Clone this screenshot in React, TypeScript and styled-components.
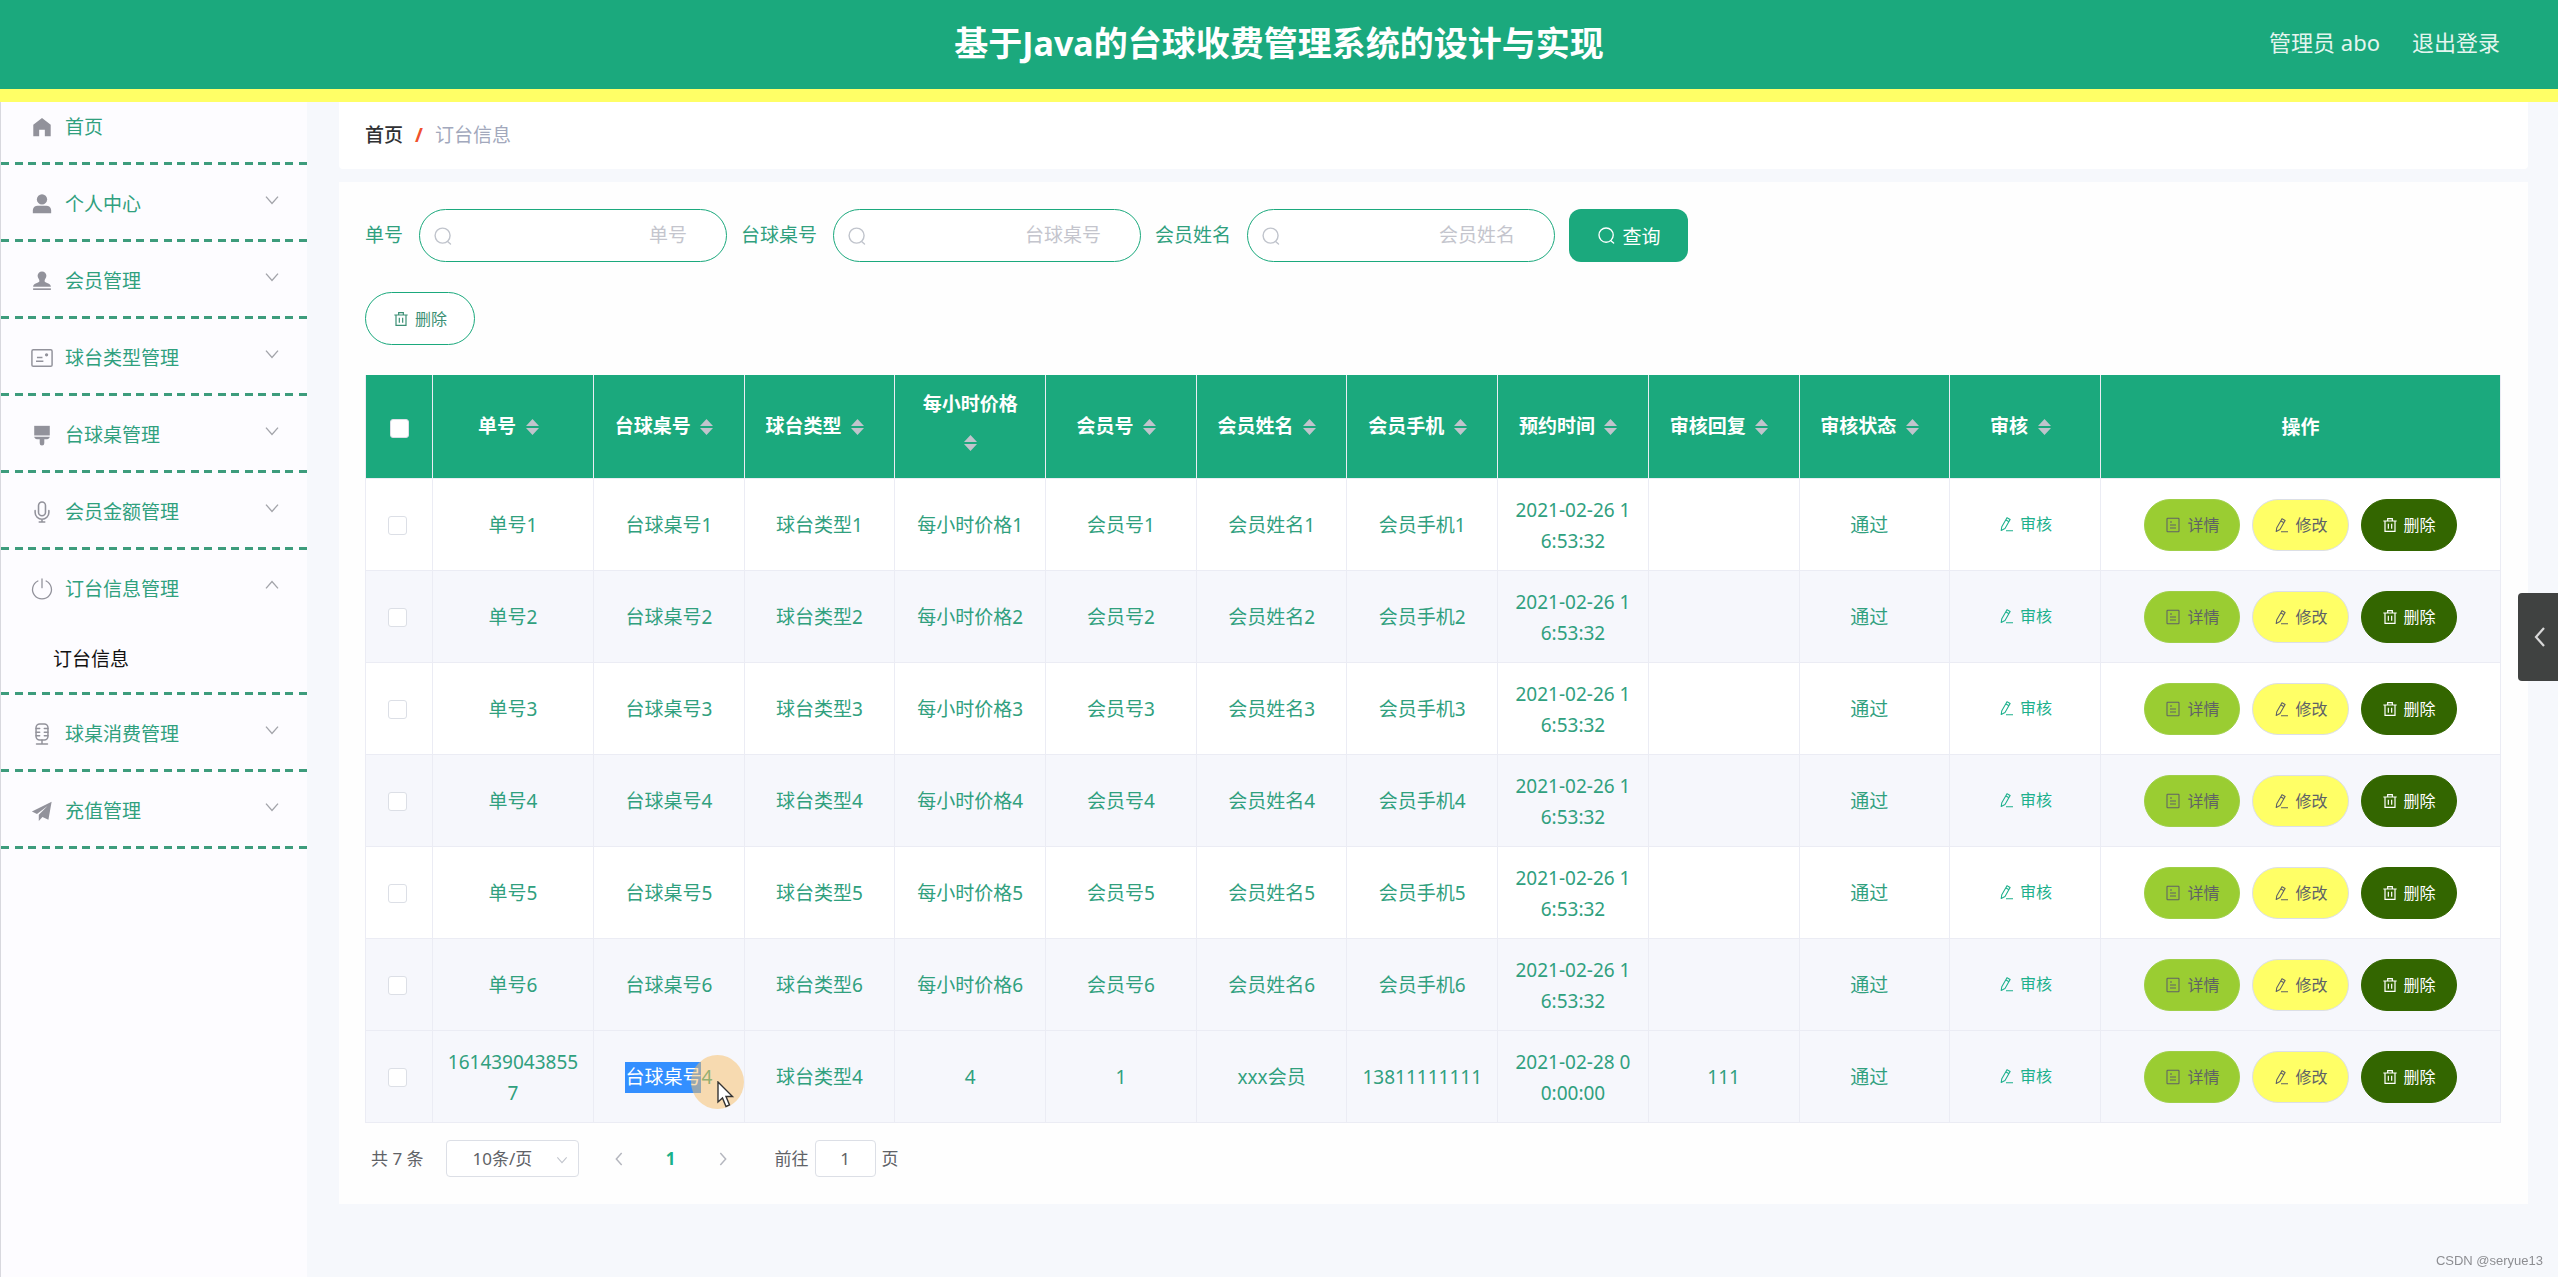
import React from 'react';
import styled, { createGlobalStyle } from 'styled-components';

const GREEN = '#1ba97d';
const TEXT_GREEN = '#30a07e';
const LINE = '#ebecf4';
const FONT = '"Noto Sans", "Noto Sans CJK SC", sans-serif';

const GlobalStyle = createGlobalStyle`
  *, *::before, *::after { box-sizing: border-box; }
  body {
    margin: 0;
    background: #f6f8fc;
    font-family: ${FONT};
    font-size: 19px;
    line-height: 31px;
    color: ${TEXT_GREEN};
  }
  button, input, select { font-family: inherit; margin: 0; }
  button { cursor: pointer; }
  a { color: inherit; text-decoration: none; }
`;

/* ---------- icons ---------- */

type IconName =
  | 'home' | 'user' | 'stamp' | 'card' | 'brush' | 'mic' | 'power' | 'studioMic' | 'plane'
  | 'down' | 'up' | 'left' | 'right' | 'search' | 'trash' | 'doc' | 'edit';

const glyphs: Record<IconName, React.ReactNode> = {
  home: <path d="M12 2.2 21.5 9.6V22h-6.4v-7H8.9v7H2.500V9.600Z" fill="currentColor" />,
  user: (
    <g fill="currentColor">
      <circle cx="12" cy="7" r="5.6" />
      <path d="M2 22v-3.500A5.500 5.500 0 0 1 7.500 14h9A5.500 5.500 0 0 1 22 18.500V22Z" />
    </g>
  ),
  stamp: (
    <g fill="currentColor">
      <path d="M12 1.500a4.800 4.800 0 0 1 4.800 4.800c0 2.700-2 3.700-2 5.700 0 2.600 6.900 1.800 6.900 6.400H2.300c0-4.600 6.900-3.800 6.900-6.400 0-2-2-3-2-5.700A4.800 4.800 0 0 1 12 1.500Z" />
      <rect x="2.300" y="20" width="19.400" height="1.800" />
    </g>
  ),
  card: (
    <g fill="none" stroke="currentColor" strokeWidth="1.600">
      <rect x="1" y="3" width="22" height="18" rx="1.500" />
      <path d="M6.500 11.500h6M5.500 15.500h8" />
      <circle cx="17" cy="8.500" r="1" fill="currentColor" />
    </g>
  ),
  brush: (
    <g fill="currentColor">
      <path d="M3.500 2h17v10.500h-17Z" />
      <path d="M3.500 14h17c-.3 1.500-1.500 2.500-3 2.500h-3V21a2.500 2.500 0 0 1-5 0v-4.500h-3c-1.500 0-2.700-1-3-2.500Z" />
    </g>
  ),
  mic: (
    <g fill="none" stroke="currentColor" strokeWidth="1.700" strokeLinecap="round">
      <rect x="8.200" y="1" width="7.600" height="15" rx="3.800" />
      <path d="M4.500 10.500v2a7.500 7.500 0 0 0 15 0v-2M12 20v3M9 23h6" />
    </g>
  ),
  power: (
    <g fill="none" stroke="currentColor" strokeWidth="1.400" strokeLinecap="round">
      <path d="M12 1v9.500M7.500 3.300a10.300 10.300 0 1 0 9 0" />
    </g>
  ),
  studioMic: (
    <g fill="none" stroke="currentColor" strokeWidth="1.600" strokeLinecap="round">
      <rect x="5.500" y="1" width="13" height="17.500" rx="4" />
      <path d="M5.500 6h4M5.500 10h4M5.500 14h4M18.500 6h-4M18.500 10h-4M18.500 14h-4M12 18.500V23M6 23h12" />
    </g>
  ),
  plane: <path d="M22.500 2 1 12.500l5.500 2.700L18 6.500 8.500 16v7l4-4.500 6.500 3Z" fill="currentColor" />,
  down: <path d="m4 7.500 8 9 8-9" fill="none" stroke="currentColor" strokeWidth="1.800" />,
  up: <path d="m4 16.500 8-9 8 9" fill="none" stroke="currentColor" strokeWidth="1.800" />,
  left: <path d="m16 3-8 9 8 9" fill="none" stroke="currentColor" strokeWidth="2.200" />,
  right: <path d="m8 3 8 9-8 9" fill="none" stroke="currentColor" strokeWidth="2.200" />,
  search: (
    <g fill="none" stroke="currentColor" strokeWidth="1.700" strokeLinecap="round">
      <circle cx="11.500" cy="11.500" r="9" />
      <path d="m17.500 18.500 3.500 3" />
    </g>
  ),
  trash: (
    <g fill="none" stroke="currentColor" strokeWidth="1.800">
      <path d="M2 6h20M8.500 6V2.500h7V6M4.500 6v15.500h15V6M9.500 10v7.500M14.500 10v7.500" />
    </g>
  ),
  doc: (
    <g fill="none" stroke="currentColor" strokeWidth="1.600">
      <rect x="3" y="2" width="18" height="20" rx="1" />
      <path d="M7.500 7.500h3M7.500 12h9M7.500 16.500h9" />
    </g>
  ),
  edit: (
    <g fill="none" stroke="currentColor" strokeWidth="1.600" strokeLinejoin="round">
      <path d="m13.500 2.500 4.700 2.700-7.700 13.500-5.700 3 .9-5.700ZM12 6l4.500 2.700M12 22h10.500" />
    </g>
  ),
};

const Svg = styled.svg<{ $size: number }>`
  display: block;
  flex: none;
  width: ${(p) => p.$size}px;
  height: ${(p) => p.$size}px;
`;

const Icon = ({ name, size }: { name: IconName; size: number }) => (
  <Svg $size={size} viewBox="0 0 24 24" aria-hidden="true">
    {glyphs[name]}
  </Svg>
);

/* ---------- frame ---------- */

const Header = styled.header`
  display: grid;
  grid-template-columns: 1fr auto 1fr;
  align-items: center;
  height: 102px;
  padding: 0 58px 3px;
  background: ${GREEN};
  border-bottom: 13px solid #ffff66;
  color: #fff;
`;

const Title = styled.h1`
  grid-column: 2;
  margin: 0;
  font-size: 34px;
  line-height: 48px;
  font-weight: 700;
`;

const Account = styled.div`
  display: flex;
  justify-content: flex-end;
  gap: 32px;
  padding-bottom: 2px;
  font-size: 22px;
  line-height: 32px;
  color: #e4f5ef;
`;

const Body = styled.div`
  display: flex;
  align-items: stretch;
  min-height: calc(100vh - 102px);
`;

const Sidebar = styled.nav`
  flex: none;
  width: 307px;
  background: #fdfcff;
  border-left: 1px solid #d8d8de;
`;

const MenuGroup = styled.div`
  padding-bottom: 3px;
  background: repeating-linear-gradient(
      to right,
      #3d9c7c 0 8px,
      transparent 8px calc((100% - 8px) / 22)
    )
    bottom / 100% 3px no-repeat;
`;

const MenuItem = styled.a<{ $home?: boolean }>`
  display: flex;
  align-items: center;
  gap: 12px;
  height: ${(p) => (p.$home ? 60 : 74)}px;
  padding: ${(p) => (p.$home ? '0 26px 10px 30px' : '4px 26px 0 30px')};
  color: ${TEXT_GREEN};
  > svg:first-child { color: #92929b; }
`;

const MenuLabel = styled.span`
  flex: 1;
`;

const Chevron = styled.span`
  color: #a3a4aa;
  padding-bottom: 8px;
`;

const SubItem = styled.a`
  display: flex;
  align-items: center;
  height: 68px;
  padding: 2px 0 0 52px;
  color: #111;
`;

const Main = styled.main`
  flex: 1;
  min-width: 0;
  padding: 0 30px 73px 32px;
`;

const Breadcrumb = styled.div`
  display: flex;
  align-items: center;
  gap: 12px;
  height: 67px;
  margin-bottom: 13px;
  padding: 0 26px;
  background: #fff;
  border-radius: 0 0 4px 4px;
  color: #a2a8bc;
`;

const Crumb = styled.a`
  font-weight: 500;
  color: #303133;
`;

const Slash = styled.span`
  font-weight: 700;
  color: #f0512d;
`;

const Panel = styled.section`
  padding: 27px 27px 27px 26px;
  background: #fefefe;
`;

/* ---------- search ---------- */

const SearchForm = styled.form`
  display: flex;
  align-items: center;
  gap: 14px;
`;

const Field = styled.div`
  display: flex;
  align-items: center;
  gap: 16px;
`;

const InputShell = styled.div`
  display: flex;
  align-items: center;
  width: 308px;
  height: 53px;
  padding: 0 37px 0 13px;
  border: 1px solid ${GREEN};
  border-radius: 27px;
  background: #fff;
  color: #c0c4cc;
`;

const TextInput = styled.input`
  flex: 1;
  min-width: 0;
  border: 0;
  outline: 0;
  background: transparent;
  text-align: right;
  font-size: 19px;
  line-height: 31px;
  color: ${TEXT_GREEN};
  &::placeholder { color: #c4c5cd; opacity: 1; }
`;

const SearchButton = styled.button`
  display: flex;
  align-items: center;
  justify-content: center;
  gap: 7px;
  width: 119px;
  height: 53px;
  border: 0;
  border-radius: 12px;
  background: ${GREEN};
  color: #fff;
  font-size: 19px;
`;

const Actions = styled.div`
  display: flex;
  padding: 30px 0;
`;

/* ---------- buttons ---------- */

type Tone = 'outline' | 'lime' | 'yellow' | 'forest';

const tones: Record<Tone, { bg: string; line: string; ink: string }> = {
  outline: { bg: '#ffffff', line: GREEN, ink: '#3b8f74' },
  lime: { bg: '#9acd32', line: '#9fcf48', ink: '#606266' },
  yellow: { bg: '#ffff66', line: '#dcdfe6', ink: '#606266' },
  forest: { bg: '#336600', line: '#336600', ink: '#ffffff' },
};

const Pill = styled.button<{ $tone: Tone; $wide?: boolean }>`
  display: inline-flex;
  align-items: center;
  gap: 6px;
  height: ${(p) => (p.$wide ? 53 : 52)}px;
  padding: 0 ${(p) => (p.$wide ? 27 : 20)}px;
  border: 1px solid ${(p) => tones[p.$tone].line};
  border-radius: 27px;
  background: ${(p) => tones[p.$tone].bg};
  color: ${(p) => tones[p.$tone].ink};
  font-size: 16px;
  line-height: 24px;
`;

const LinkButton = styled.button`
  display: inline-flex;
  align-items: center;
  gap: 6px;
  padding: 0;
  border: 0;
  background: none;
  color: #1cb08c;
  font-size: 16px;
  line-height: 24px;
`;

const RowActions = styled.div`
  display: flex;
  justify-content: center;
  gap: 12px;
`;

/* ---------- table ---------- */

const Table = styled.table`
  width: 100%;
  table-layout: fixed;
  border-collapse: separate;
  border-spacing: 0;
  border-left: 1px solid ${LINE};
`;

const Th = styled.th`
  height: 104px;
  padding: 1px 13px 0;
  background: ${GREEN};
  border-right: 1px solid ${LINE};
  border-bottom: 1px solid ${LINE};
  color: #fff;
  font-weight: 700;
  text-align: center;
  vertical-align: middle;
`;

const Td = styled.td`
  position: relative;
  height: 92px;
  padding: 2px 13px 0;
  border-right: 1px solid ${LINE};
  border-bottom: 1px solid ${LINE};
  text-align: center;
  vertical-align: middle;
  word-break: break-all;
`;

const CheckTd = styled(Td)`
  padding: 0 17px 0 13px;
`;

const StatusTd = styled(Td)`
  padding: 2px 23px 0 13px;
`;

const ActionTd = styled(Td)`
  padding: 0 13px;
`;

const Row = styled.tr<{ $shaded: boolean }>`
  background: ${(p) => (p.$shaded ? '#f6f7fc' : '#ffffff')};
`;

const Check = styled.input`
  display: inline-block;
  appearance: none;
  width: 19px;
  height: 19px;
  margin: 0;
  border: 1px solid #dcdfe6;
  border-radius: 3px;
  background: #fff;
  vertical-align: middle;
`;

const Caret = styled.span`
  display: inline-flex;
  align-items: center;
  justify-content: center;
  width: 32px;
  height: 45px;
  vertical-align: middle;
`;

const SortCaret = () => (
  <Caret>
    <svg width="13" height="16" viewBox="0 0 13 16" aria-hidden="true">
      <path d="M6.500 0 13 7H0ZM6.500 16 0 9h13Z" fill="#c0c4cc" />
    </svg>
  </Caret>
);

const Selected = styled.span`
  display: inline-block;
  background: #338fff;
  color: #fff;
`;

const PointerHalo = styled.span`
  position: absolute;
  left: 97px;
  top: 24px;
  width: 53px;
  height: 54px;
  border-radius: 50%;
  background: rgba(247, 190, 100, 0.5);
  pointer-events: none;
  svg { position: absolute; left: 26px; top: 26px; }
`;

/* ---------- pagination ---------- */

const Pagination = styled.div`
  display: flex;
  align-items: center;
  padding: 17px 0 0 6px;
  font-size: 17px;
  line-height: 37px;
  color: #606266;
`;

const SizePicker = styled.div`
  position: relative;
  margin: 0 14px 0 22px;
  svg { position: absolute; right: 10px; top: 13px; color: #c0c4cc; pointer-events: none; }
`;

const SizeSelect = styled.select`
  display: block;
  appearance: none;
  width: 133px;
  height: 37px;
  padding: 0 26px;
  border: 1px solid #dcdfe6;
  border-radius: 4px;
  background: #fff;
  color: #606266;
  font-size: 17px;
`;

const PageButton = styled.button<{ $current?: boolean }>`
  display: flex;
  align-items: center;
  justify-content: center;
  width: 52px;
  height: 37px;
  padding: 0;
  border: 0;
  background: none;
  font-size: 17px;
  font-weight: 700;
  color: ${(p) => (p.$current ? '#18b18a' : '#b4b6be')};
`;

const Jump = styled.label`
  display: flex;
  align-items: center;
  gap: 6px;
  margin-left: 26px;
`;

const JumpInput = styled.input`
  width: 61px;
  height: 37px;
  border: 1px solid #dcdfe6;
  border-radius: 4px;
  background: #fff;
  color: #606266;
  font-size: 17px;
  text-align: center;
`;

/* ---------- floating parts ---------- */

const SideTab = styled.button`
  position: fixed;
  right: 0;
  top: 593px;
  display: flex;
  align-items: center;
  justify-content: center;
  width: 40px;
  height: 88px;
  padding: 0 0 0 4px;
  border: 0;
  border-radius: 4px 0 0 4px;
  background: #404241;
  color: #d8d8d8;
`;

const Watermark = styled.div`
  position: fixed;
  right: 15px;
  bottom: 6px;
  font-family: "Liberation Sans", Arial, sans-serif;
  font-size: 13px;
  line-height: 20px;
  color: #8d8e92;
`;

/* ---------- data ---------- */

const menu: { icon: IconName; label: string; open?: boolean }[] = [
  { icon: 'user', label: '个人中心' },
  { icon: 'stamp', label: '会员管理' },
  { icon: 'card', label: '球台类型管理' },
  { icon: 'brush', label: '台球桌管理' },
  { icon: 'mic', label: '会员金额管理' },
  { icon: 'power', label: '订台信息管理', open: true },
  { icon: 'studioMic', label: '球桌消费管理' },
  { icon: 'plane', label: '充值管理' },
];

const columns = [
  '单号', '台球桌号', '球台类型', '每小时价格', '会员号', '会员姓名',
  '会员手机', '预约时间', '审核回复', '审核状态', '审核',
];

const rows: string[][] = [
  ...[1, 2, 3, 4, 5, 6].map((n) => [
    `单号${n}`, `台球桌号${n}`, `球台类型${n}`, `每小时价格${n}`, `会员号${n}`,
    `会员姓名${n}`, `会员手机${n}`, '2021-02-26 16:53:32', '', '通过',
  ]),
  ['1614390438557', '台球桌号4', '球台类型4', '4', '1', 'xxx会员', '13811111111',
    '2021-02-28 00:00:00', '111', '通过'],
];

const HOVERED = 6;
const STATUS = columns.indexOf('审核状态');

const SearchField = ({ id, label }: { id: string; label: string }) => (
  <Field>
    <label htmlFor={id}>{label}</label>
    <InputShell>
      <Icon name="search" size={20} />
      <TextInput id={id} placeholder={label} />
    </InputShell>
  </Field>
);

const PointedCell = ({ text }: { text: string }) => (
  <Td>
    <Selected>{text.slice(0, 4)}</Selected>
    {text.slice(4)}
    <PointerHalo>
      <svg width="18" height="27" viewBox="0 0 18 27" aria-hidden="true">
        <path
          d="M1 1v20l4.500-4 3.500 8.500 3.500-1.500L9 15.500h6.500Z"
          fill="#fff"
          stroke="#333"
          strokeWidth="1.400"
        />
      </svg>
    </PointerHalo>
  </Td>
);

export default function App() {
  return (
    <>
      <GlobalStyle />
      <Header>
        <Title>基于Java的台球收费管理系统的设计与实现</Title>
        <Account>
          <span>管理员 abo</span>
          <a href="#logout">退出登录</a>
        </Account>
      </Header>
      <Body>
        <Sidebar>
          <MenuGroup>
            <MenuItem href="#home" $home>
              <Icon name="home" size={22} />
              <MenuLabel>首页</MenuLabel>
            </MenuItem>
          </MenuGroup>
          {menu.map((m) => (
            <MenuGroup key={m.label}>
              <MenuItem href={`#${m.icon}`}>
                <Icon name={m.icon} size={22} />
                <MenuLabel>{m.label}</MenuLabel>
                <Chevron>
                  <Icon name={m.open ? 'up' : 'down'} size={18} />
                </Chevron>
              </MenuItem>
              {m.open && <SubItem href="#booking">订台信息</SubItem>}
            </MenuGroup>
          ))}
        </Sidebar>
        <Main>
          <Breadcrumb>
            <Crumb href="#home">首页</Crumb>
            <Slash>/</Slash>
            <span>订台信息</span>
          </Breadcrumb>
          <Panel>
            <SearchForm>
              <SearchField id="order" label="单号" />
              <SearchField id="table" label="台球桌号" />
              <SearchField id="member" label="会员姓名" />
              <SearchButton type="button">
                <Icon name="search" size={19} />
                查询
              </SearchButton>
            </SearchForm>
            <Actions>
              <Pill type="button" $tone="outline" $wide>
                <Icon name="trash" size={16} />
                删除
              </Pill>
            </Actions>
            <Table>
              <colgroup>
                <col style={{ width: 67 }} />
                <col style={{ width: 161 }} />
                {columns.slice(1).map((c) => <col key={c} />)}
                <col style={{ width: 400 }} />
              </colgroup>
              <thead>
                <tr>
                  <Th><Check type="checkbox" aria-label="全选" /></Th>
                  {columns.map((c) => (
                    <Th key={c}>{c}<SortCaret /></Th>
                  ))}
                  <Th>操作</Th>
                </tr>
              </thead>
              <tbody>
                {rows.map((r, i) => (
                  <Row key={r[0]} $shaded={i % 2 === 1 || i === HOVERED}>
                    <CheckTd><Check type="checkbox" aria-label={r[0]} /></CheckTd>
                    {r.map((text, j) => {
                      if (i === HOVERED && j === 1) return <PointedCell key={columns[j]} text={text} />;
                      if (j === STATUS) return <StatusTd key={columns[j]}>{text}</StatusTd>;
                      return <Td key={columns[j]}>{text}</Td>;
                    })}
                    <Td>
                      <LinkButton type="button">
                        <Icon name="edit" size={16} />
                        审核
                      </LinkButton>
                    </Td>
                    <ActionTd>
                      <RowActions>
                        <Pill type="button" $tone="lime"><Icon name="doc" size={16} />详情</Pill>
                        <Pill type="button" $tone="yellow"><Icon name="edit" size={16} />修改</Pill>
                        <Pill type="button" $tone="forest"><Icon name="trash" size={16} />删除</Pill>
                      </RowActions>
                    </ActionTd>
                  </Row>
                ))}
              </tbody>
            </Table>
            <Pagination>
              <span>共 7 条</span>
              <SizePicker>
                <SizeSelect aria-label="每页条数" defaultValue="10">
                  <option value="10">10条/页</option>
                </SizeSelect>
                <Icon name="down" size={14} />
              </SizePicker>
              <PageButton type="button" aria-label="上一页"><Icon name="left" size={16} /></PageButton>
              <PageButton type="button" $current>1</PageButton>
              <PageButton type="button" aria-label="下一页"><Icon name="right" size={16} /></PageButton>
              <Jump>
                前往
                <JumpInput defaultValue="1" />
                页
              </Jump>
            </Pagination>
          </Panel>
        </Main>
      </Body>
      <SideTab type="button" aria-label="展开"><Icon name="left" size={24} /></SideTab>
      <Watermark>CSDN @seryue13</Watermark>
    </>
  );
}
